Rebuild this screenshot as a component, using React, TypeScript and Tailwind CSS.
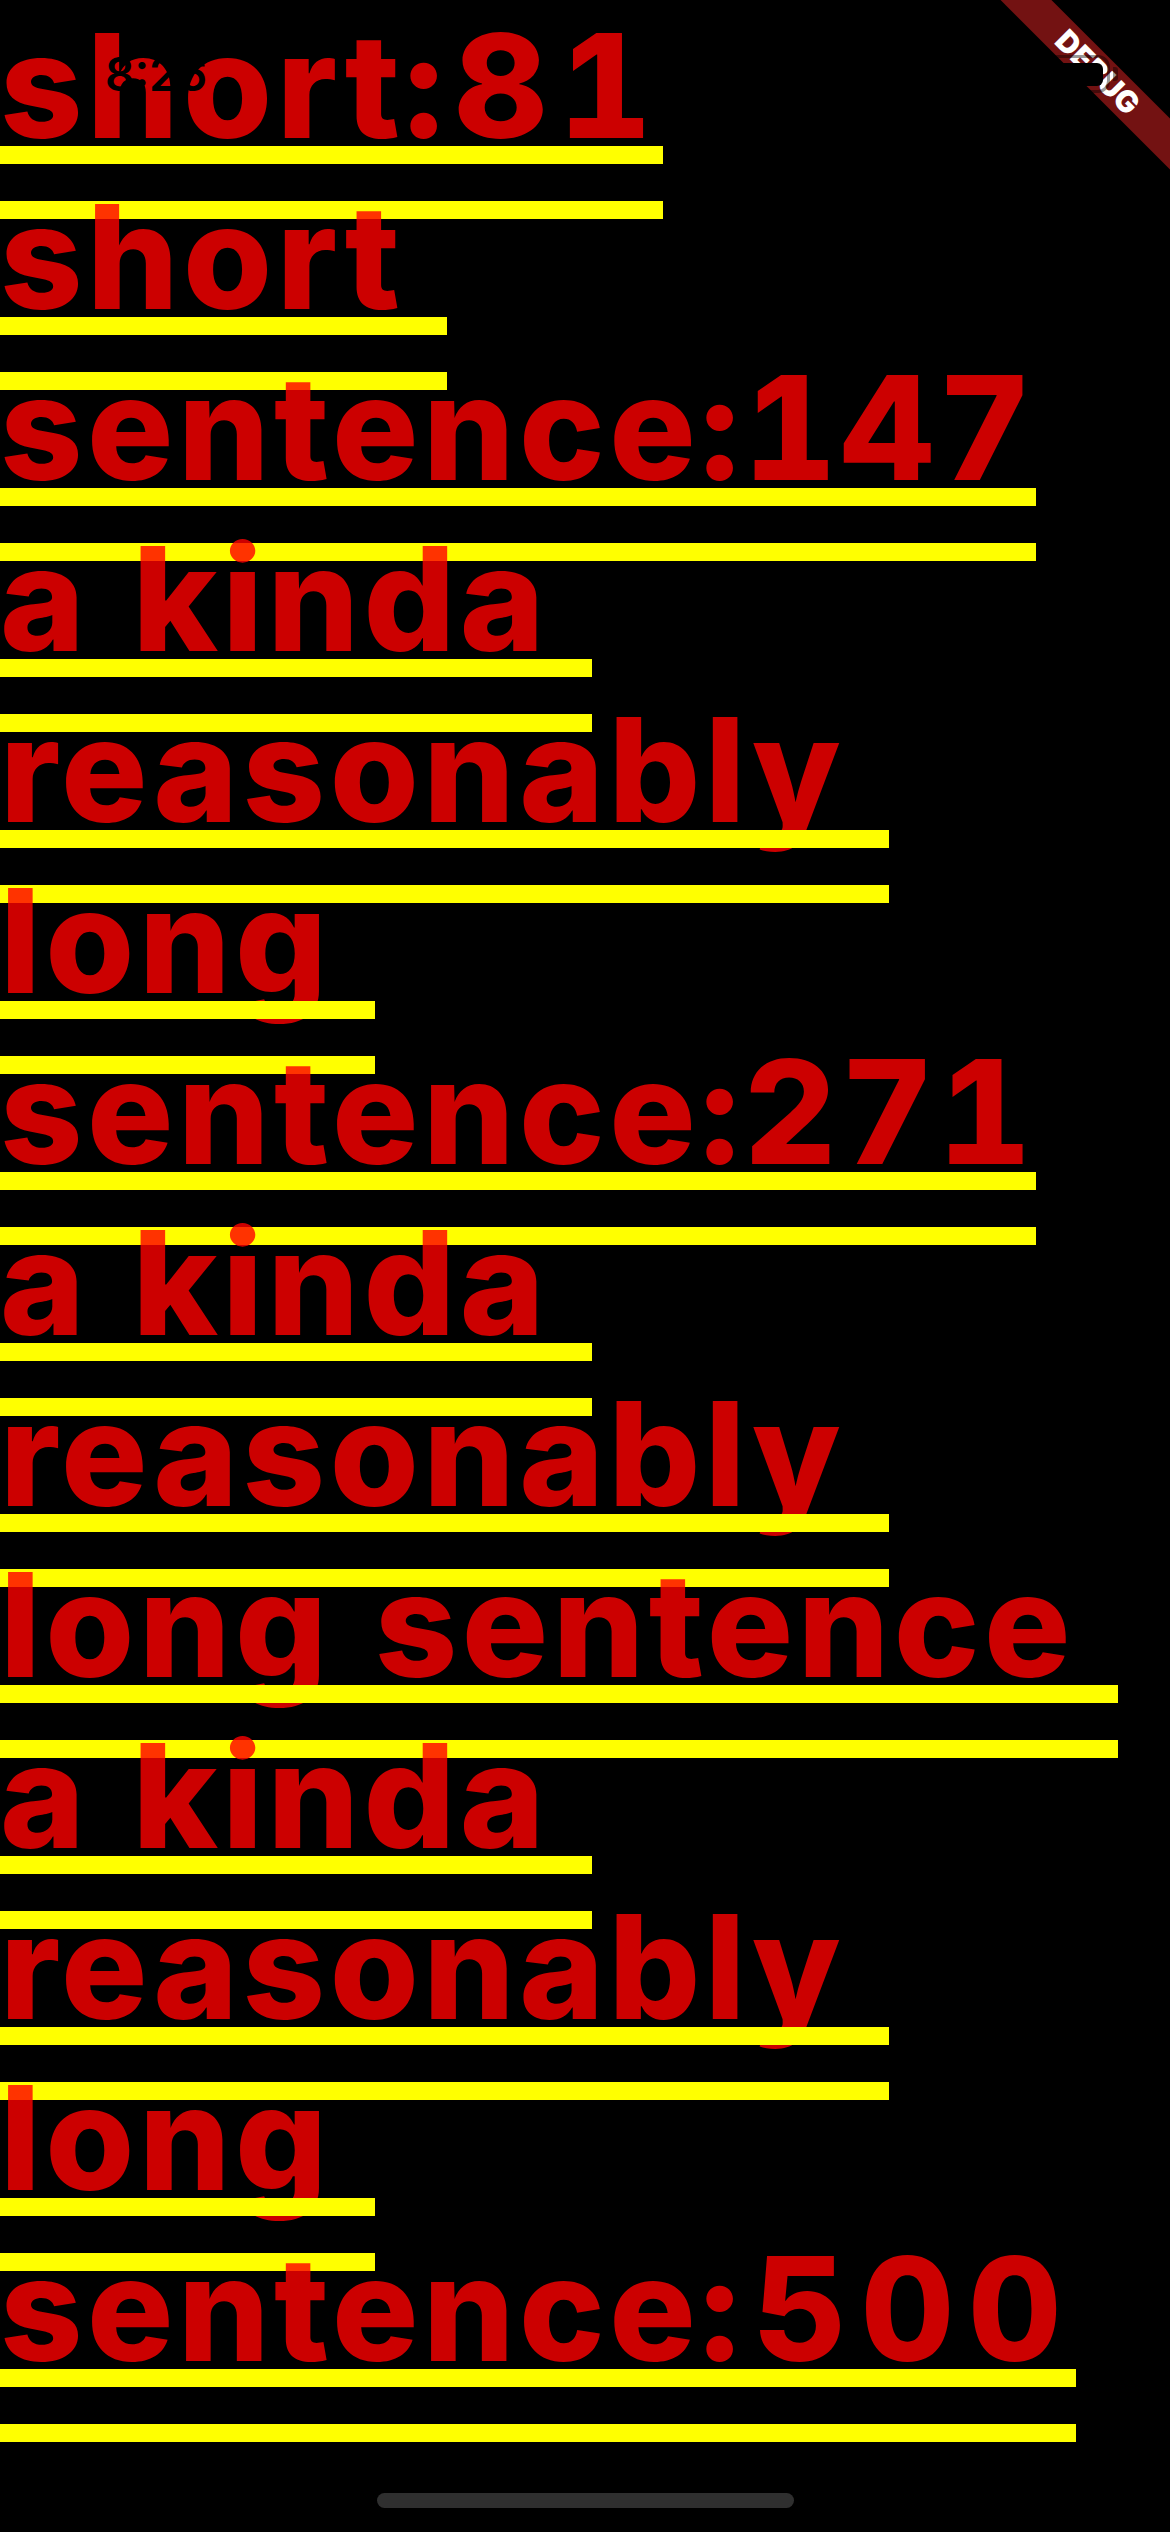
type Line = { text: string; tail?: string; wide?: boolean };

// each visual line of the wrapped paragraphs; digits in the tail get extra spacing
const lines: Line[] = [
  { text: "short", tail: ":81", wide: false },
  { text: "short " },
  { text: "sentence:147" },
  { text: "a kinda " },
  { text: "reasonably " },
  { text: "long " },
  { text: "sentence:271" },
  { text: "a kinda " },
  { text: "reasonably " },
  { text: "long sentence " },
  { text: "a kinda " },
  { text: "reasonably " },
  { text: "long " },
  { text: "sentence", tail: ":500", wide: true },
];

function TextLine({ line, first }: { line: Line; first: boolean }) {
  return (
    <div className={first ? "relative w-fit" : "relative w-fit mt-[-48px]"}>
      <div className="h-[146px] whitespace-pre text-[144px] leading-[171px] font-extrabold tracking-[4.5px] tabular-nums text-[#ff0000cc]">
        {line.text}
        {line.tail && (
          <span className={line.wide ? "tracking-[14.5px]" : "tracking-[11.5px]"}>{line.tail}</span>
        )}
      </div>
      {/* double underline */}
      <div className="relative h-[18px] bg-[#ffff00]" />
      <div className="relative mt-[37px] h-[18px] bg-[#ffff00]" />
    </div>
  );
}

export default function App() {
  return (
    <div className="relative h-[2532px] w-[1170px] overflow-hidden bg-black font-['Inter','Noto_Sans',sans-serif]">
      <div className="flex flex-col">
        {lines.map((l, i) => (
          <TextLine key={i} line={l} first={i === 0} />
        ))}
      </div>

      {/* debug banner */}
      <div className="absolute left-[978px] top-[54px] flex h-[36px] w-[240px] rotate-45 items-center justify-center bg-[#b71c1ca0] text-[30px] font-black leading-none text-white shadow-[0_0_6px_rgba(0,0,0,0.5)]">
        DEBUG
      </div>

      {/* status bar */}
      <div className="absolute inset-x-0 top-0 flex items-start justify-between pl-[105px] pr-[52px] pt-[46px]">
        <span className="text-[46px] font-semibold leading-[56px] text-black">8:26</span>
        <div className="mt-[9px] flex items-center">
          <div className="flex h-[38px] w-[64px] items-center justify-center rounded-[12px] border-[3px] border-[#00000066]">
            <div className="h-[23px] w-[49px] rounded-[6px] bg-black" />
          </div>
          <div className="ml-[3px] h-[14px] w-[5px] rounded-r-[3px] bg-[#00000066]" />
        </div>
      </div>

      {/* home indicator */}
      <div className="absolute inset-x-0 bottom-[24px] flex justify-center">
        <div className="h-[15px] w-[417px] rounded-full bg-[#2f2f2f]" />
      </div>
    </div>
  );
}
